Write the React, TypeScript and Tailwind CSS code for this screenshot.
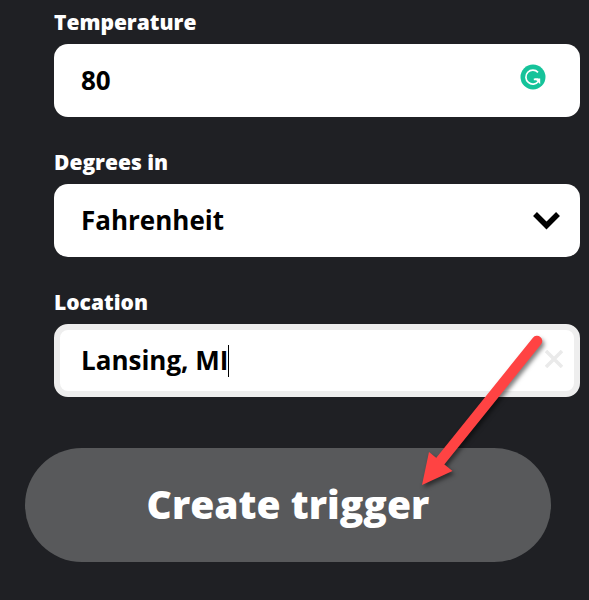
import { useState } from "react";

const labelClass = "block mb-2 text-[21px] leading-7 font-extrabold text-white";
const boxClass =
  "flex items-center h-[73px] rounded-[14px] bg-white text-black text-[26px] font-bold";

function GrammarIcon() {
  return (
    <svg width="26" height="26" viewBox="0 0 26 26" aria-hidden="true">
      <circle cx="13" cy="13" r="12.5" fill="#15c39a" />
      <path
        d="M18 8.300A7 7 0 1 0 18.500 17.300M13.800 15.300H18"
        fill="none"
        stroke="#fff"
        strokeWidth="1.700"
      />
      <path d="M14.500 14.500H20.200V20.200L17.700 17.400Z" fill="#fff" />
    </svg>
  );
}

function PointerArrow() {
  return (
    <svg
      className="pointer-events-none absolute right-[29px] top-[325px] drop-shadow-[2px_3px_2px_rgba(0,0,0,0.5)]"
      width="160"
      height="175"
      viewBox="400 325 160 175"
      aria-hidden="true"
    >
      <path d="M537 341L438 464" stroke="#ff4343" strokeWidth="10.500" strokeLinecap="round" />
      <path d="M422 485L429 452L452.500 471Z" fill="#ff4343" />
    </svg>
  );
}

export default function App() {
  const [temperature, setTemperature] = useState("80");
  const [unit, setUnit] = useState("Fahrenheit");
  const [location, setLocation] = useState("Lansing, MI");

  return (
    <main className="relative min-h-dvh bg-[#1f2024] pt-2 pb-9 font-['Open_Sans',sans-serif]">
      <form onSubmit={(e) => e.preventDefault()}>
        <div className="flex flex-col gap-[31px] pl-[54px] pr-[9px]">
          <div>
            <label htmlFor="temperature" className={labelClass}>
              Temperature
            </label>
            <div className={`${boxClass} pl-[27px] pr-[34px]`}>
              <input
                id="temperature"
                className="min-w-0 flex-1 bg-transparent outline-none"
                value={temperature}
                onChange={(e) => setTemperature(e.target.value)}
              />
              <div className="pb-2">
                <GrammarIcon />
              </div>
            </div>
          </div>

          <div>
            <label htmlFor="unit" className={labelClass}>
              Degrees in
            </label>
            <div className="relative">
              <select
                id="unit"
                className={`${boxClass} w-full appearance-none pl-[27px] pr-16 outline-none`}
                value={unit}
                onChange={(e) => setUnit(e.target.value)}
              >
                <option>Fahrenheit</option>
                <option>Celsius</option>
              </select>
              <svg
                className="pointer-events-none absolute right-5 top-7"
                width="27"
                height="18"
                viewBox="0 0 27 18"
                aria-hidden="true"
              >
                <path d="M2 2L13.500 13.500L25 2" fill="none" stroke="#000" strokeWidth="5.500" />
              </svg>
            </div>
          </div>

          <div>
            <label htmlFor="location" className={labelClass}>
              Location
            </label>
            <div className={`${boxClass} border-6 border-[#eeeeee] pl-[21px] pr-[11px]`}>
              <input
                id="location"
                className="min-w-0 field-sizing-content bg-transparent caret-transparent outline-none"
                value={location}
                onChange={(e) => setLocation(e.target.value)}
              />
              <span className="h-8 w-px bg-black" />
              <button type="button" aria-label="Clear location" className="ml-auto pb-1">
                <svg width="18" height="18" viewBox="0 0 18 18" aria-hidden="true">
                  <path d="M1 1L17 17M17 1L1 17" stroke="#eaeaea" strokeWidth="3.500" />
                </svg>
              </button>
            </div>
          </div>
        </div>

        <div className="mt-[51px] pl-[25px] pr-[38px]">
          <button
            type="submit"
            className="h-[114px] w-full rounded-full bg-[#58595b] pb-0.5 text-[39px] font-extrabold text-white"
          >
            Create trigger
          </button>
        </div>
      </form>
      <PointerArrow />
    </main>
  );
}
